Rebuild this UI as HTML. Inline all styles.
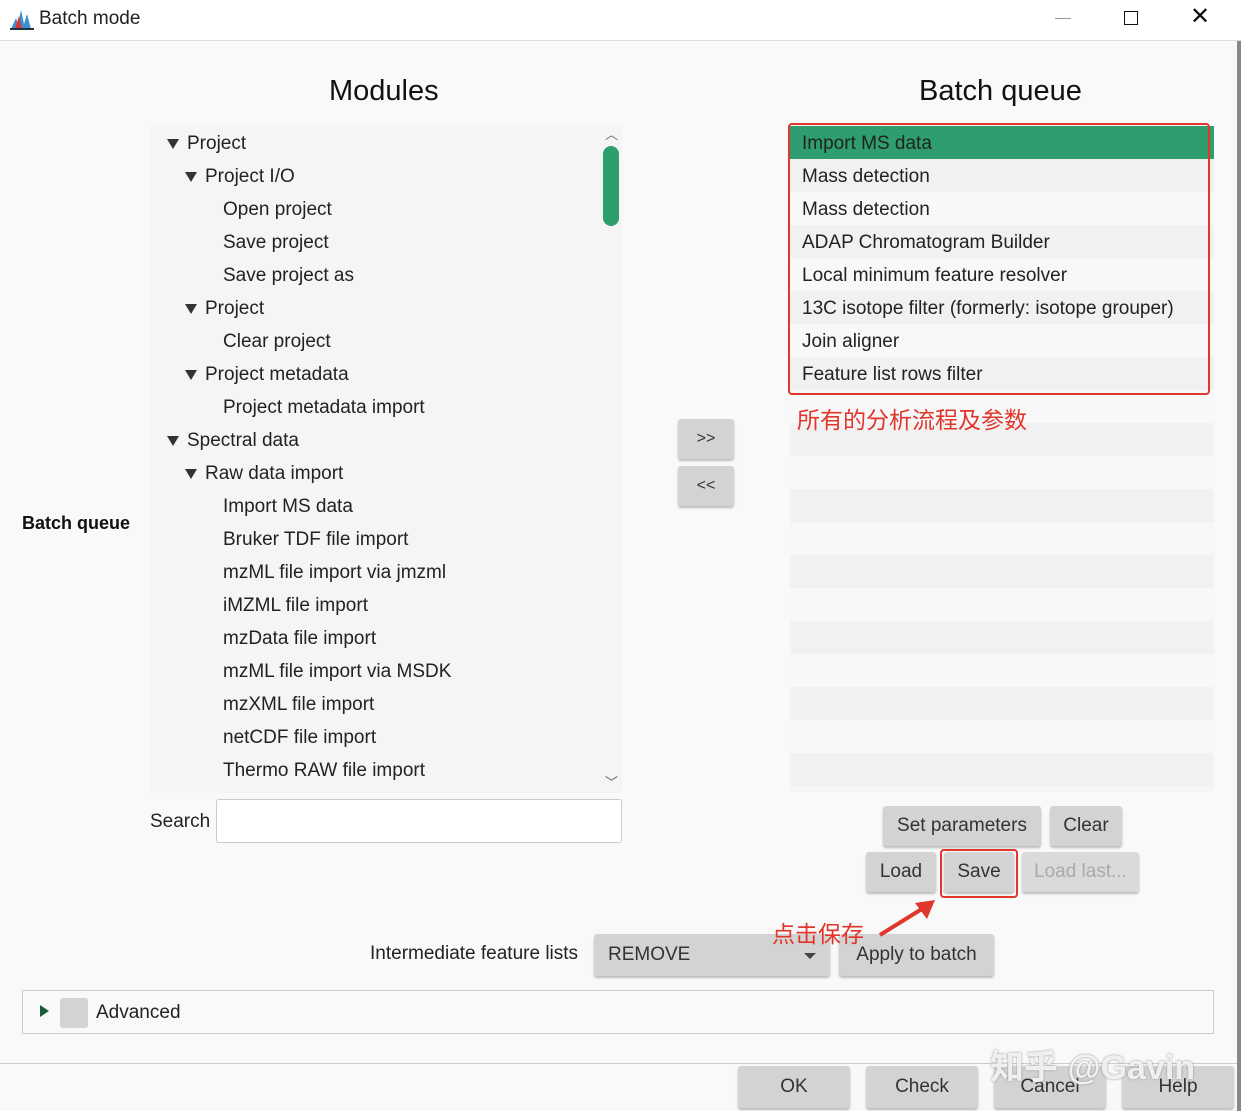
<!DOCTYPE html>
<html><head><meta charset="utf-8"><style>
*{box-sizing:border-box;margin:0;padding:0}
body{width:1241px;height:1111px;background:#f9f9f9;font-family:"Liberation Sans","Noto Sans CJK SC",sans-serif;color:#222;position:relative;overflow:hidden}
.a{position:absolute}
.title{left:0;top:0;width:1241px;height:41px;background:#fff;border-bottom:1px solid #ddd}
.t{font-size:19px;white-space:nowrap}
.btn{position:absolute;background:#d3d3d3;border-radius:3px;box-shadow:0 2px 2px #bbb;font-size:19px;text-align:center;color:#333}
.row{position:absolute;left:790px;width:424px;height:33px;font-size:19px;padding-left:12px;line-height:35px}
.tri{position:absolute;width:0;height:0;border-left:6px solid transparent;border-right:6px solid transparent;border-top:10px solid #333}
</style></head><body>
<div class="a title"></div>
<svg class="a" style="left:10px;top:6px" width="24" height="24"><path d="M1 23 L6 12 L8 18 L11 4 L14 18 L17 8 L21 23Z" fill="#3a8fd0"/><path d="M5 23 L9 10 L12 23Z" fill="#d33"/><rect x="0" y="22" width="24" height="2" fill="#234"/></svg>
<div class="a t" style="left:39px;top:8px">Batch mode</div>
<div class="a" style="left:1055px;top:18px;width:16px;height:1px;background:#999"></div>
<div class="a" style="left:1124px;top:11px;width:14px;height:14px;border:1.5px solid #111"></div>
<div class="a" style="left:1190px;top:2px;font-size:24px;color:#111">✕</div>
<div class="a" style="left:1237px;top:41px;width:4px;height:1070px;background:#888"></div>

<div class="a" style="left:329px;top:75px;font-size:29px;color:#111">Modules</div>
<div class="a" style="left:919px;top:75px;font-size:29px;color:#111">Batch queue</div>
<div class="a" style="left:22px;top:513px;font-size:18px;font-weight:bold;color:#111">Batch queue</div>

<div class="a" style="left:150px;top:125px;width:472px;height:668px;background:#f5f5f5"></div>
<div class="a" style="left:603px;top:146px;width:16px;height:80px;background:#2e9e6e;border-radius:8px"></div>
<div class="a" style="left:605px;top:124px;font-size:13px;color:#666">︿</div>
<div class="a" style="left:605px;top:772px;font-size:13px;color:#666">﹀</div>
<div id="tree"></div>

<div class="a" style="left:790px;top:126px;width:424px;height:666px;background:#f6f6f6"></div>
<div id="q"></div>
<div class="a" style="left:788px;top:123px;width:422px;height:272px;border:2.5px solid #e0362c;border-radius:4px"></div>
<div class="a" style="left:797px;top:401px;font-size:23px;color:#e0362c">所有的分析流程及参数</div>

<div class="btn" style="left:678px;top:419px;width:56px;height:40px;line-height:40px;font-size:16px">&gt;&gt;</div>
<div class="btn" style="left:678px;top:466px;width:56px;height:40px;line-height:40px;font-size:16px">&lt;&lt;</div>

<div class="a t" style="left:150px;top:811px">Search</div>
<div class="a" style="left:216px;top:799px;width:406px;height:44px;background:#fff;border:1px solid #ccc;border-radius:3px"></div>

<div class="btn" style="left:883px;top:806px;width:158px;height:40px;line-height:40px">Set parameters</div>
<div class="btn" style="left:1050px;top:806px;width:72px;height:40px;line-height:40px">Clear</div>
<div class="btn" style="left:866px;top:852px;width:70px;height:40px;line-height:40px">Load</div>
<div class="btn" style="left:944px;top:852px;width:70px;height:40px;line-height:40px">Save</div>
<div class="btn" style="left:1022px;top:852px;width:117px;height:40px;line-height:40px;color:#aaa;background:#dadada">Load last...</div>
<div class="a" style="left:940px;top:849px;width:78px;height:49px;border:2.5px solid #e0362c;border-radius:4px"></div>

<div class="a t" style="left:370px;top:943px">Intermediate feature lists</div>
<div class="btn" style="left:594px;top:934px;width:236px;height:42px;line-height:42px;text-align:left;padding-left:14px">REMOVE<span style="position:absolute;right:14px;top:19px;border-left:6px solid transparent;border-right:6px solid transparent;border-top:6px solid #444"></span></div>
<div class="btn" style="left:839px;top:934px;width:155px;height:42px;line-height:42px">Apply to batch</div>
<svg class="a" style="left:875px;top:895px;z-index:5" width="70" height="45"><line x1="5" y1="40" x2="50" y2="12" stroke="#e0362c" stroke-width="4"/><path d="M60 5 L40 8 L52 24Z" fill="#e0362c"/></svg>
<div class="a" style="left:772px;top:915px;font-size:23px;color:#e0362c;z-index:5">点击保存</div>

<div class="a" style="left:22px;top:990px;width:1192px;height:44px;border:1px solid #ccc;background:#f9f9f9"></div>
<div class="a" style="left:40px;top:1005px;border-top:6px solid transparent;border-bottom:6px solid transparent;border-left:9px solid #1c5a3c"></div>
<div class="a" style="left:60px;top:998px;width:28px;height:30px;background:#d3d3d3;border-radius:3px"></div>
<div class="a t" style="left:96px;top:1002px">Advanced</div>

<div class="a" style="left:0;top:1063px;width:1237px;height:1px;background:#ccc"></div>
<div class="btn" style="left:738px;top:1066px;width:112px;height:42px;line-height:42px">OK</div>
<div class="btn" style="left:866px;top:1066px;width:112px;height:42px;line-height:42px">Check</div>
<div class="btn" style="left:994px;top:1066px;width:112px;height:42px;line-height:42px">Cancel</div>
<div class="btn" style="left:1122px;top:1066px;width:112px;height:42px;line-height:42px">Help</div>
<div class="a" style="left:990px;top:1040px;font-size:34px;color:rgba(255,255,255,.85);text-shadow:0 0 2px #888;font-weight:bold">知乎 @Gavin</div>

<script>
var tree=[[0,1,"Project"],[1,1,"Project I/O"],[2,0,"Open project"],[2,0,"Save project"],[2,0,"Save project as"],[1,1,"Project"],[2,0,"Clear project"],[1,1,"Project metadata"],[2,0,"Project metadata import"],[0,1,"Spectral data"],[1,1,"Raw data import"],[2,0,"Import MS data"],[2,0,"Bruker TDF file import"],[2,0,"mzML file import via jmzml"],[2,0,"iMZML file import"],[2,0,"mzData file import"],[2,0,"mzML file import via MSDK"],[2,0,"mzXML file import"],[2,0,"netCDF file import"],[2,0,"Thermo RAW file import"]];
var h="";tree.forEach(function(r,i){var y=133+i*33;var x=187+r[0]*18;
if(r[1])h+='<div class="tri" style="left:'+(x-20)+'px;top:'+(y+6)+'px"></div>';
h+='<div class="a t" style="left:'+x+'px;top:'+y+'px">'+r[2]+'</div>';});
document.getElementById("tree").innerHTML=h;
var q=["Import MS data","Mass detection","Mass detection","ADAP Chromatogram Builder","Local minimum feature resolver","13C isotope filter (formerly: isotope grouper)","Join aligner","Feature list rows filter"];
h="";for(var i=0;i<20;i++){var y=126+i*33;var bg=i==0?"#2e9e6e":(i%2?"#f1f1f1":"#f8f8f8");h+='<div class="row" style="top:'+y+'px;background:'+bg+'">'+(q[i]||"")+'</div>';}
document.getElementById("q").innerHTML=h;
</script>
</body></html>
